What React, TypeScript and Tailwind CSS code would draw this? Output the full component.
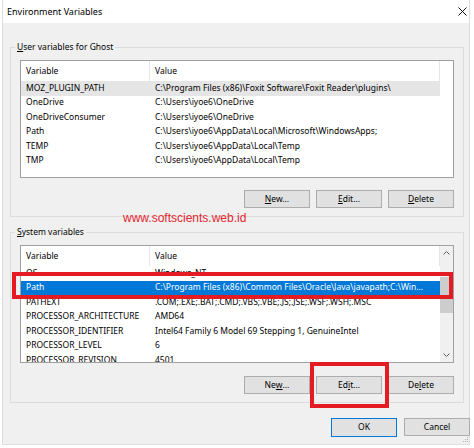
import React from 'react';

type EnvVar = { name: string; value: string };

const userVars: EnvVar[] = [
  { name: 'MOZ_PLUGIN_PATH', value: 'C:\\Program Files (x86)\\Foxit Software\\Foxit Reader\\plugins\\' },
  { name: 'OneDrive', value: 'C:\\Users\\iyoe6\\OneDrive' },
  { name: 'OneDriveConsumer', value: 'C:\\Users\\iyoe6\\OneDrive' },
  { name: 'Path', value: 'C:\\Users\\iyoe6\\AppData\\Local\\Microsoft\\WindowsApps;' },
  { name: 'TEMP', value: 'C:\\Users\\iyoe6\\AppData\\Local\\Temp' },
  { name: 'TMP', value: 'C:\\Users\\iyoe6\\AppData\\Local\\Temp' },
];

const systemVars: EnvVar[] = [
  { name: 'OS', value: 'Windows_NT' },
  { name: 'Path', value: 'C:\\Program Files (x86)\\Common Files\\Oracle\\Java\\javapath;C:\\Win...' },
  { name: 'PATHEXT', value: '.COM;.EXE;.BAT;.CMD;.VBS;.VBE;.JS;.JSE;.WSF;.WSH;.MSC' },
  { name: 'PROCESSOR_ARCHITECTURE', value: 'AMD64' },
  { name: 'PROCESSOR_IDENTIFIER', value: 'Intel64 Family 6 Model 69 Stepping 1, GenuineIntel' },
  { name: 'PROCESSOR_LEVEL', value: '6' },
  { name: 'PROCESSOR_REVISION', value: '4501' },
];

type Selection = 'none' | 'inactive' | 'active';

function VarRow({ v, sel }: { v: EnvVar; sel: Selection }) {
  const tone =
    sel === 'active' ? 'bg-[#0078d7] text-white' : sel === 'inactive' ? 'bg-[#e5e5e5]' : '';
  return (
    <div className={`flex h-[14.5px] items-center ${tone}`}>
      <div className="w-[129px] shrink-0 overflow-hidden whitespace-nowrap pl-[5px]">{v.name}</div>
      <div className="w-[290px] shrink-0 overflow-hidden whitespace-nowrap pl-[5px]">{v.value}</div>
    </div>
  );
}

function Chevron({ down }: { down?: boolean }) {
  return (
    <svg width="7" height="4" viewBox="0 0 7 4" className={down ? 'rotate-180' : ''}>
      <polyline points="0.5,3.5 3.5,0.5 6.5,3.5" fill="none" stroke="#606060" strokeWidth="1" />
    </svg>
  );
}

function ScrollBar() {
  return (
    <div className="flex w-[13px] shrink-0 flex-col bg-[#f0f0f0]">
      <div className="flex h-[14px] items-center justify-center">
        <Chevron />
      </div>
      <div className="flex-1">
        <div className="mx-auto mt-[17px] h-[36px] w-[13px] bg-[#cdcdcd]" />
      </div>
      <div className="flex h-[14px] items-center justify-center">
        <Chevron down />
      </div>
    </div>
  );
}

function VarList({
  rows,
  selectedIndex,
  active,
  scroll,
}: {
  rows: EnvVar[];
  selectedIndex: number;
  active: boolean;
  scroll?: boolean;
}) {
  return (
    <div className="mt-[7px] flex h-[118px] w-[434px] overflow-hidden border border-[#a0a0a0] bg-white">
      <div className="w-[419px] shrink-0">
        <div className="flex h-[20px]">
          <div className="flex w-[129px] items-center border-r border-[#e5e5e5] pl-[5px]">Variable</div>
          <div className="flex w-[290px] items-center border-r border-[#e5e5e5] pl-[5px]">Value</div>
        </div>
        {rows.map((v, i) => (
          <VarRow
            key={v.name + i}
            v={v}
            sel={i === selectedIndex ? (active ? 'active' : 'inactive') : 'none'}
          />
        ))}
      </div>
      {scroll ? <ScrollBar /> : <div className="flex-1" />}
    </div>
  );
}

function Btn({ children, primary }: { children: React.ReactNode; primary?: boolean }) {
  return (
    <button
      className={`flex w-[66px] items-center justify-center border bg-[#e1e1e1] ${
        primary ? 'h-[19px] border-[#0078d7]' : 'h-[18px] border-[#adadad]'
      }`}
    >
      {children}
    </button>
  );
}

export default function App() {
  return (
    <div className="relative h-[448px] w-[474px] overflow-hidden bg-white font-['Noto_Sans',sans-serif] text-[8.5px] text-black">
      <div className="ml-[2px] flex h-[445px] w-[468px] flex-col border-b border-l border-r border-[#dedede]">
        {/* title bar */}
        <div className="flex h-[23px] shrink-0 items-center justify-between bg-white pl-[4px] pr-[2px]">
          <span className="text-[9px]">Environment Variables</span>
          <svg width="9" height="9" viewBox="0 0 9 9">
            <path d="M0.5 0.5 L8.5 8.5 M8.5 0.5 L0.5 8.5" stroke="#111" strokeWidth="1" />
          </svg>
        </div>

        <div className="flex-1 bg-[#f0f0f0] pl-[7px] pt-[18px]">
          <fieldset className="w-[454px] border border-[#dcdcdc] px-[9px] pb-[8px]">
            <legend className="ml-[-5px] px-[2px] leading-[12px]">
              <u>U</u>ser variables for Ghost
            </legend>
            <VarList rows={userVars} selectedIndex={0} active={false} />
            <div className="mt-[12px] flex justify-end gap-[6px]">
              <Btn>
                <u>N</u>ew...
              </Btn>
              <Btn>
                <u>E</u>dit...
              </Btn>
              <Btn>
                <u>D</u>elete
              </Btn>
            </div>
          </fieldset>

          <fieldset className="mt-[9px] w-[454px] border border-[#dcdcdc] px-[9px] pb-[8px]">
            <legend className="ml-[-5px] px-[2px] leading-[12px]">
              <u>S</u>ystem variables
            </legend>
            <VarList rows={systemVars} selectedIndex={1} active scroll />
            <div className="mt-[13px] flex justify-end gap-[6px]">
              <Btn>
                Ne<u>w</u>...
              </Btn>
              <Btn>
                Ed<u>i</u>t...
              </Btn>
              <Btn>
                De<u>l</u>ete
              </Btn>
            </div>
          </fieldset>

          <div className="mt-[15px] flex w-[460px] justify-end gap-[7px]">
            <Btn primary>OK</Btn>
            <Btn>Cancel</Btn>
          </div>
        </div>
      </div>

      {/* size grip */}
      <svg className="absolute left-[463px] top-[437px]" width="6" height="6" viewBox="0 0 6 6">
        <rect x="4" y="0" width="1" height="1" fill="#b0b0b0" />
        <rect x="2" y="2" width="1" height="1" fill="#b0b0b0" />
        <rect x="4" y="2" width="1" height="1" fill="#b0b0b0" />
        <rect x="0" y="4" width="1" height="1" fill="#b0b0b0" />
        <rect x="2" y="4" width="1" height="1" fill="#b0b0b0" />
        <rect x="4" y="4" width="1" height="1" fill="#b0b0b0" />
      </svg>

      {/* watermark and markup */}
      <div className="absolute left-[123px] top-[211px] font-['Liberation_Sans',Arial,sans-serif] text-[12px] leading-[15px] text-[#e4262f]">
        www.softscients.web.id
      </div>
      <div className="absolute left-[12px] top-[272px] h-[27px] w-[441px] border-4 border-[#e31b23]" />
      <div className="absolute left-[310px] top-[362px] h-[46px] w-[79px] border-4 border-[#e31b23]" />
    </div>
  );
}
